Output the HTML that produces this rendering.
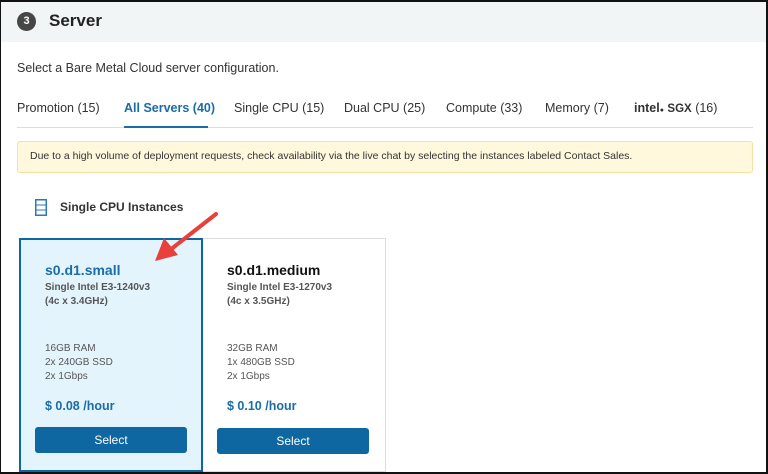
<!DOCTYPE html>
<html><head><style>
*{margin:0;padding:0;box-sizing:border-box}
body{width:768px;height:474px;background:#fff;font-family:"Liberation Sans",sans-serif;position:relative;overflow:hidden;color:#333}
.frame{position:absolute;inset:0;border:2px solid #111;border-left-width:1px;pointer-events:none}
.hdr{position:absolute;left:0;top:0;width:768px;height:42px;background:#f1f5f6}
.circ{position:absolute;left:17px;top:12px;width:19px;height:19px;border-radius:50%;background:#464646;color:#fff;font-size:11px;font-weight:bold;text-align:center;line-height:19px}
.t{position:absolute;white-space:nowrap}
.card{position:absolute;top:238px;width:184px;height:234px}
.btn{position:absolute;left:14px;top:189px;width:152px;height:26px;background:#0e67a0;border-radius:3px;color:#fff;font-size:12px;text-align:center;line-height:26px}
.nm{font-weight:bold;font-size:14px}
.sm{font-size:10px;color:#555;line-height:14px}
.pr{font-weight:bold;font-size:12.5px;color:#1a6da6}
</style></head><body>
<div class="hdr"></div>
<div class="circ">3</div>
<div class="t" style="left:49px;top:11px;font-size:17px;font-weight:bold;color:#222">Server</div>
<div class="t" style="left:17px;top:61px;font-size:12.5px;color:#333">Select a Bare Metal Cloud server configuration.</div>
<div class="t" style="left:17px;top:101px;font-size:12.5px;color:#333">Promotion (15)</div>
<div class="t" style="left:124px;top:101px;font-size:12.5px;color:#1a6da6;font-weight:bold">All Servers (40)</div>
<div class="t" style="left:234px;top:101px;font-size:12.5px;color:#333">Single CPU (15)</div>
<div class="t" style="left:344px;top:101px;font-size:12.5px;color:#333">Dual CPU (25)</div>
<div class="t" style="left:446px;top:101px;font-size:12.5px;color:#333">Compute (33)</div>
<div class="t" style="left:545px;top:101px;font-size:12.5px;color:#333">Memory (7)</div>
<div class="t" style="left:634px;top:101px;font-size:12.5px;color:#333"><b>intel</b><span style="font-size:7px">●</span> <b style="font-size:11.5px">SGX</b> (16)</div>
<div style="position:absolute;left:17px;top:127px;width:736px;height:1px;background:#ddd"></div>
<div style="position:absolute;left:124px;top:126px;width:84px;height:2px;background:#1a6da6"></div>
<div style="position:absolute;left:17px;top:141px;width:736px;height:32px;background:#fff8dd;border:1px solid #f6e1a0;border-radius:3px"></div>
<div class="t" style="left:30px;top:150px;font-size:10.5px;color:#333">Due to a high volume of deployment requests, check availability via the live chat by selecting the instances labeled Contact Sales.</div>
<svg style="position:absolute;left:35px;top:199px" width="12" height="17" viewBox="0 0 12 17"><rect x="0.75" y="0.75" width="10.5" height="15.5" fill="#fff" stroke="#2a7ab8" stroke-width="1.5"/><line x1="1" y1="6" x2="11" y2="6" stroke="#2a7ab8"/><line x1="1" y1="11" x2="11" y2="11" stroke="#2a7ab8"/></svg>
<div class="t" style="left:60px;top:200px;font-size:12px;font-weight:bold;color:#333">Single CPU Instances</div>
<div class="card" style="left:202px;border:1px solid #ddd;background:#fff">
 <div class="t nm" style="left:24px;top:23px;color:#111">s0.d1.medium</div>
 <div class="t sm" style="left:24px;top:42px;font-weight:bold">Single Intel E3-1270v3<br>(4c x 3.5GHz)</div>
 <div class="t sm" style="left:24px;top:103px">32GB RAM<br>1x 480GB SSD<br>2x 1Gbps</div>
 <div class="t pr" style="left:24px;top:160px">$ 0.10 /hour</div>
 <div class="btn">Select</div>
</div>
<div class="card" style="left:19px;border:2px solid #0e67a0;background:#e4f4fd">
 <div class="t nm" style="left:24px;top:22px;color:#1a6da6">s0.d1.small</div>
 <div class="t sm" style="left:24px;top:41px;font-weight:bold">Single Intel E3-1240v3<br>(4c x 3.4GHz)</div>
 <div class="t sm" style="left:24px;top:102px">16GB RAM<br>2x 240GB SSD<br>2x 1Gbps</div>
 <div class="t pr" style="left:24px;top:159px">$ 0.08 /hour</div>
 <div class="btn" style="left:14px;top:187px">Select</div>
</div>
<svg style="position:absolute;left:0;top:0" width="768" height="474"><line x1="216" y1="214" x2="170" y2="250" stroke="#e8403a" stroke-width="4" stroke-linecap="round"/><polygon points="155,261 164,238 178,255" fill="#e8403a"/></svg>
<div class="frame"></div>
</body></html>
